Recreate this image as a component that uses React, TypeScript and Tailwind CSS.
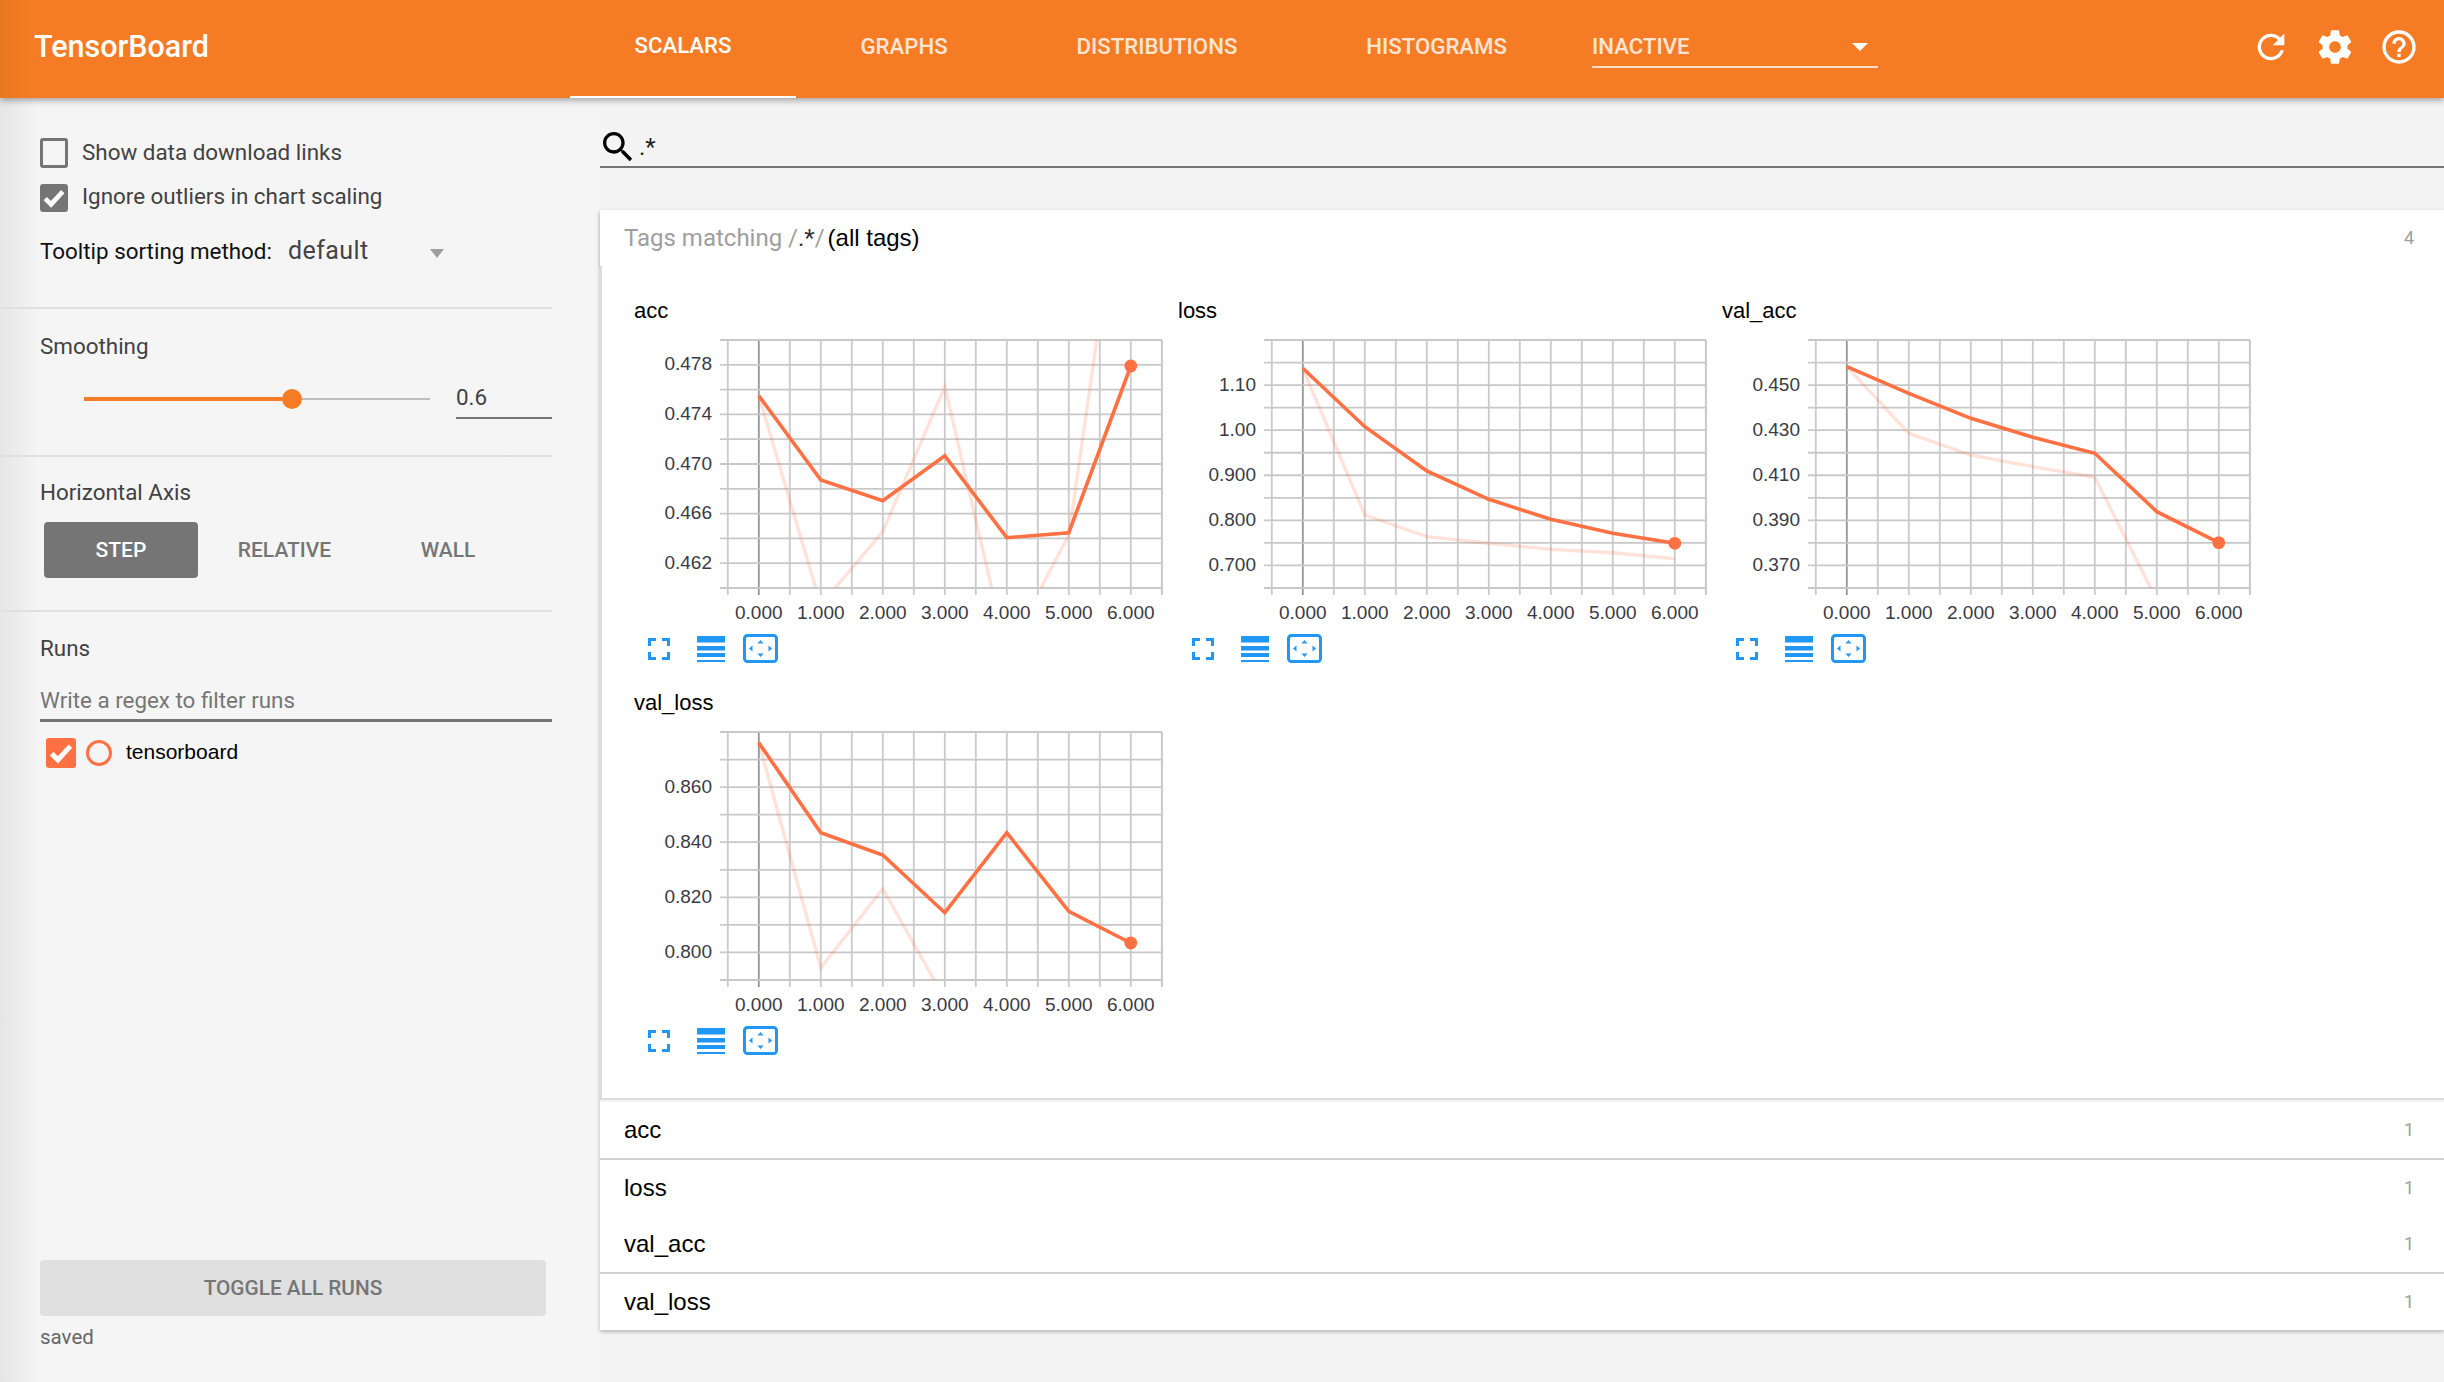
const HELV = "font-['Liberation_Sans',sans-serif]";

// plot is always 442 wide and 248 tall, steps sit every 62px
type ChartProps = {
  id: string;
  title: string;
  hLines: number;
  labels: { at: number; text: string }[];
  main: number[];
  faded: number[];
};

const stepX = (n: number) => 38.8 + 62 * n;
const toPoints = (ys: number[]) => ys.map((y, i) => `${stepX(i)},${y}`).join(" ");

const charts: ChartProps[] = [
  {
    id: "acc",
    title: "acc",
    hLines: 10,
    labels: [
      { at: 1, text: "0.478" },
      { at: 3, text: "0.474" },
      { at: 5, text: "0.470" },
      { at: 7, text: "0.466" },
      { at: 9, text: "0.462" },
    ],
    main: [55.7, 140, 160.7, 115.7, 197.7, 192.7, 26],
    faded: [55.7, 265, 191.7, 46.7, 313, 195, -237],
  },
  {
    id: "loss",
    title: "loss",
    hLines: 11,
    labels: [
      { at: 2, text: "1.10" },
      { at: 4, text: "1.00" },
      { at: 6, text: "0.900" },
      { at: 8, text: "0.800" },
      { at: 10, text: "0.700" },
    ],
    main: [28.3, 86.7, 131, 159.3, 179.3, 193.3, 203.3],
    faded: [28.3, 175, 196.7, 203.3, 209.3, 212.7, 218.7],
  },
  {
    id: "val_acc",
    title: "val_acc",
    hLines: 11,
    labels: [
      { at: 2, text: "0.450" },
      { at: 4, text: "0.430" },
      { at: 6, text: "0.410" },
      { at: 8, text: "0.390" },
      { at: 10, text: "0.370" },
    ],
    main: [26.7, 53.3, 78.3, 97.3, 113.3, 171.7, 202.7],
    faded: [26.7, 93.3, 115, 126.7, 137.3, 260, 320],
  },
  {
    id: "val_loss",
    title: "val_loss",
    hLines: 9,
    labels: [
      { at: 2, text: "0.860" },
      { at: 4, text: "0.840" },
      { at: 6, text: "0.820" },
      { at: 8, text: "0.800" },
    ],
    main: [10.7, 100.7, 123, 180.7, 100.7, 179.3, 211],
    faded: [10.7, 235.7, 156.7, 267, 400, 400, 400],
  },
];

function Chart({ id, title, hLines, labels, main, faded }: ChartProps) {
  const rowH = 248 / hLines;
  const verticals = Array.from({ length: 15 }, (_, i) => 7.8 + 31 * i);
  const horizontals = Array.from({ length: hLines + 1 }, (_, i) => i * rowH);
  const last = main[main.length - 1];

  return (
    <div className="h-[392px] w-[544px]">
      <div className={`${HELV} h-7 text-[22px] leading-7 text-black`}>{title}</div>
      <svg width="544" height="300" className={`mt-px block ${HELV}`}>
        <g transform="translate(86 14)">
          {verticals.map((x) => (
            <line key={x} x1={x} x2={x} y1={0} y2={255} stroke={x === stepX(0) ? "#969696" : "#cacaca"} strokeWidth="1.8" />
          ))}
          <line x1={442} x2={442} y1={0} y2={255} stroke="#cacaca" strokeWidth="1.8" />
          {horizontals.map((y) => (
            <line key={y} x1={0} x2={442} y1={y} y2={y} stroke="#c8c8c8" strokeWidth="1.8" />
          ))}
          <clipPath id={`clip-${id}`}>
            <rect x="0" y="0" width="442" height="248" />
          </clipPath>
          <g clipPath={`url(#clip-${id})`}>
            <polyline points={toPoints(faded)} fill="none" stroke="#ff7043" strokeOpacity="0.2" strokeWidth="3.4" />
            <polyline points={toPoints(main)} fill="none" stroke="#ff7043" strokeWidth="3.6" />
            <circle cx={stepX(6)} cy={last} r="6.4" fill="#ff7043" />
          </g>
          {labels.map((l) => (
            <text key={l.text} x={-8} y={l.at * rowH + 5.5} textAnchor="end" fontSize="19" fill="#3a3a44">
              {l.text}
            </text>
          ))}
          {[0, 1, 2, 3, 4, 5, 6].map((n) => (
            <text key={n} x={stepX(n)} y={279} textAnchor="middle" fontSize="19" fill="#3a3a44">
              {n}.000
            </text>
          ))}
        </g>
      </svg>
      <div className="mt-[8px] flex h-[29px] items-center pl-[14px]">
        <svg width="22" height="22" viewBox="0 0 22 22" fill="none" stroke="#2196f3" strokeWidth="3">
          <path d="M1.5 8V1.5H8M14 1.5h6.5V8M20.5 14v6.5H14M8 20.5H1.5V14" />
        </svg>
        <svg width="28" height="26" viewBox="0 0 28 26" fill="#2196f3" className="ml-[27px]">
          <rect x="0" y="0" width="28" height="6.5" />
          <rect x="0" y="10" width="28" height="4.5" />
          <rect x="0" y="17" width="28" height="4" />
          <rect x="0" y="24" width="28" height="2" />
        </svg>
        <svg width="35" height="29" viewBox="0 0 35 29" className="ml-[18px]">
          <rect x="1.5" y="1.5" width="32" height="26" rx="3" fill="none" stroke="#2196f3" strokeWidth="3" />
          <path d="M17.5 6l3 3.5h-6zM17.5 23l-3-3.5h6zM6 14.5l3.5-3v6zM29 14.5l-3.5 3v-6z" fill="#2196f3" />
        </svg>
      </div>
    </div>
  );
}

function Check() {
  return (
    <svg viewBox="0 0 24 24" className="h-full w-full" fill="none" stroke="#fff" strokeWidth="4">
      <path d="M4.5 12.5l5 5 10-11" />
    </svg>
  );
}

function Row({ name, border }: { name: string; border?: boolean }) {
  return (
    <div className={`flex items-center justify-between bg-white pl-6 pr-[30px] ${border ? "h-[58px] border-b-2 border-[#d0d0d0]" : "h-14"}`}>
      <span className={`${HELV} text-2xl text-black`}>{name}</span>
      <span className="text-lg text-[#9e9e9e]">1</span>
    </div>
  );
}

export default function App() {
  return (
    <div className="flex h-screen w-full flex-col overflow-hidden bg-[#f5f5f5] font-['Roboto',sans-serif]">
      <header className="relative z-10 flex h-[98px] shrink-0 items-stretch bg-linear-to-r from-[#ea7722] to-[#f57c24] to-[30px] text-white shadow-[0_3px_6px_rgba(0,0,0,0.3)]">
        <div className="w-[570px] pl-[34px] pt-[27px] text-[30.5px] font-medium leading-10">TensorBoard</div>
        <nav className="flex text-[22.2px] font-medium">
          <div className="flex h-full items-center border-b-2 border-white px-[64.5px] pb-[4px]">SCALARS</div>
          <div className="flex h-full items-center px-[64.5px] pb-[4px] text-white/80">GRAPHS</div>
          <div className="flex h-full items-center px-[64.5px] pb-[4px] text-white/80">DISTRIBUTIONS</div>
          <div className="flex h-full items-center pl-[64.5px] pb-[4px] text-white/80">HISTOGRAMS</div>
        </nav>
        <div className="ml-[85px] mt-[28px] flex h-10 w-[286px] items-center justify-between border-b-2 border-white/75 pr-[10px] text-[22.2px] font-medium text-white/80">
          INACTIVE
          <span className="h-0 w-0 border-x-[8px] border-t-[8px] border-x-transparent border-t-white" />
        </div>
        <div className="ml-auto mr-[25px] flex items-center gap-6 pb-[4px]">
          <svg width="40" height="40" viewBox="0 0 24 24" fill="#fff">
            <path d="M17.65 6.35C16.2 4.9 14.21 4 12 4c-4.42 0-7.99 3.58-7.99 8s3.57 8 7.99 8c3.73 0 6.84-2.55 7.73-6h-2.08c-.82 2.33-3.04 4-5.65 4-3.31 0-6-2.69-6-6s2.69-6 6-6c1.66 0 3.14.69 4.22 1.78L13 11h7V4l-2.35 2.35z" />
          </svg>
          <svg width="40" height="40" viewBox="0 0 24 24" fill="#fff">
            <path d="M19.43 12.98c.04-.32.07-.64.07-.98s-.03-.66-.07-.98l2.11-1.65c.19-.15.24-.42.12-.64l-2-3.46c-.12-.22-.39-.3-.61-.22l-2.49 1c-.52-.4-1.08-.73-1.69-.98l-.38-2.65C14.46 2.18 14.25 2 14 2h-4c-.25 0-.46.18-.49.42l-.38 2.65c-.61.25-1.17.59-1.69.98l-2.49-1c-.23-.09-.49 0-.61.22l-2 3.46c-.13.22-.07.49.12.64l2.11 1.65c-.04.32-.07.65-.07.98s.03.66.07.98l-2.11 1.65c-.19.15-.24.42-.12.64l2 3.46c.12.22.39.3.61.22l2.49-1c.52.4 1.08.73 1.69.98l.38 2.65c.03.24.24.42.49.42h4c.25 0 .46-.18.49-.42l.38-2.65c.61-.25 1.17-.59 1.69-.98l2.49 1c.23.09.49 0 .61-.22l2-3.46c.12-.22.07-.49-.12-.64l-2.11-1.65zM12 15.5c-1.93 0-3.5-1.57-3.5-3.5s1.57-3.5 3.5-3.5 3.5 1.57 3.5 3.5-1.57 3.5-3.5 3.5z" />
          </svg>
          <svg width="40" height="40" viewBox="0 0 24 24" fill="#fff">
            <path d="M11 18h2v-2h-2v2zm1-16C6.48 2 2 6.48 2 12s4.48 10 10 10 10-4.48 10-10S17.52 2 12 2zm0 18c-4.41 0-8-3.59-8-8s3.59-8 8-8 8 3.59 8 8-3.59 8-8 8zm0-14c-2.21 0-4 1.79-4 4h2c0-1.1.9-2 2-2s2 .9 2 2c0 2-3 1.75-3 5h2c0-2.25 3-2.5 3-5 0-2.21-1.79-4-4-4z" />
          </svg>
        </div>
      </header>

      <div className="flex min-h-0 flex-1">
        <aside className="flex w-[600px] shrink-0 flex-col bg-linear-to-r from-[#e6e6e6] to-[#f5f5f5] to-[40px] text-[22.4px]">
          <section className="w-[552px] border-b-2 border-[#e0e0e0] pb-[42px] pl-10 pt-10">
            <div className="flex h-[30px] items-center">
              <span className="h-[30px] w-[28px] rounded-[3px] border-[3.5px] border-[#757575]" />
              <span className="ml-[14px] pb-[1px] text-[#424242]">Show data download links</span>
            </div>
            <div className="mt-4 flex h-[28px] items-center">
              <span className="h-[28px] w-[28px] rounded-[3px] bg-[#757575]">
                <Check />
              </span>
              <span className="ml-[14px] pb-[2px] text-[#424242]">Ignore outliers in chart scaling</span>
            </div>
            <div className="mt-[25px] flex h-7 items-center">
              <span className="w-[248px] pt-[1px] text-[#111]">Tooltip sorting method:</span>
              <span className="w-[142px] text-[25px] tracking-[0.4px] text-[#444]">default</span>
              <span className="mt-[4px] h-0 w-0 border-x-[7px] border-t-[9px] border-x-transparent border-t-[#9e9e9e]" />
            </div>
          </section>

          <section className="w-[552px] border-b-2 border-[#e0e0e0] pb-[36px] pl-10 pt-[23px]">
            <div className="h-7 leading-7 text-[#424242]">Smoothing</div>
            <div className="mt-[19px] flex h-10 items-center">
              <div className="ml-[44px] flex w-[346px] items-center">
                <div className="h-1 w-[198px] bg-[#f57c24]" />
                <div className="h-5 w-5 rounded-full bg-[#f57c24]" />
                <div className="h-0.5 flex-1 bg-[#bdbdbd]" />
              </div>
              <div className="ml-[26px] flex h-10 flex-1 items-center border-b-2 border-[#757575] text-[#424242]">0.6</div>
            </div>
          </section>

          <section className="w-[552px] border-b-2 border-[#e0e0e0] pb-8 pl-10 pt-[21px]">
            <div className="h-7 leading-7 text-[#424242]">Horizontal Axis</div>
            <div className="ml-1 mt-4 flex gap-[9.5px] text-[21px] font-medium">
              <div className="flex h-14 w-[154px] items-center justify-center rounded bg-[#757575] pt-[2px] text-white">STEP</div>
              <div className="flex h-14 w-[154px] items-center justify-center pt-[2px] text-[#757575]">RELATIVE</div>
              <div className="flex h-14 w-[154px] items-center justify-center pt-[2px] text-[#757575]">WALL</div>
            </div>
          </section>

          <section className="w-[552px] pl-10 pt-[22px]">
            <div className="h-7 leading-7 text-[#424242]">Runs</div>
            <div className="mt-[22px] flex h-[38px] items-start border-b-[3px] border-[#757575] leading-[32px] text-[#757575]">
              Write a regex to filter runs
            </div>
            <div className="mt-[16px] flex h-[30px] items-center pl-[6px]">
              <span className="h-[30px] w-[30px] rounded-[3px] bg-[#ff7043]">
                <Check />
              </span>
              <span className="ml-[10px] h-[26px] w-[26px] rounded-full border-[3px] border-[#ff7043]" />
              <span className={`${HELV} ml-[14px] pb-[2px] text-[21px] text-black`}>tensorboard</span>
            </div>
          </section>

          <div className="mt-auto pb-[31px] pl-10">
            <div className="flex h-14 w-[506px] items-center justify-center rounded bg-[#e0e0e0] pt-[2px] text-[20.8px] font-medium text-[#757575]">
              TOGGLE ALL RUNS
            </div>
            <div className="mt-[7px] h-7 text-[20.5px] leading-7 text-[#666]">saved</div>
          </div>
        </aside>

        <main className="min-w-0 flex-1 bg-[#f4f4f4]">
          <div className="mt-[32px] flex h-[38px] items-start border-b-2 border-[#757575]">
            <svg width="40" height="40" viewBox="0 0 24 24" fill="#000" className="-mt-[3px] ml-[-2px]">
              <path d="M15.5 14h-.79l-.28-.27C15.41 12.59 16 11.11 16 9.5 16 5.91 13.09 3 9.5 3S3 5.91 3 9.5 5.91 16 9.5 16c1.61 0 3.09-.59 4.23-1.57l.27.28v.79l5 4.99L20.49 19l-4.99-5zm-6 0C7.01 14 5 11.99 5 9.5S7.01 5 9.5 5 14 7.01 14 9.5 11.99 14 9.5 14z" />
            </svg>
            <span className="ml-[1px] text-2xl leading-[34px] text-[#222]">.*</span>
          </div>

          <div className="mt-[42px] shadow-[0_2px_4px_rgba(0,0,0,0.25)]">
            <div className="flex h-14 items-center justify-between bg-white pl-6 pr-[30px] shadow-[0_2px_4px_rgba(0,0,0,0.15)]">
              <span className="text-2xl text-[#9e9e9e]">
                Tags matching /<span className="text-[#333]">.*</span>/{" "}
                <span className={`${HELV} -ml-[3px] text-black`}>(all tags)</span>
              </span>
              <span className="text-lg text-[#9e9e9e]">4</span>
            </div>
            <div className="flex flex-wrap border-b-2 border-l-2 border-[#dcdcdc] bg-white pb-[17px] pl-8 pt-[31px]">
              {charts.map((c) => (
                <Chart key={c.id} {...c} />
              ))}
            </div>
            <div className="h-0.5 bg-[#f4f4f4]" />
            <Row name="acc" border />
            <Row name="loss" />
            <Row name="val_acc" border />
            <Row name="val_loss" />
          </div>
        </main>
      </div>
    </div>
  );
}
